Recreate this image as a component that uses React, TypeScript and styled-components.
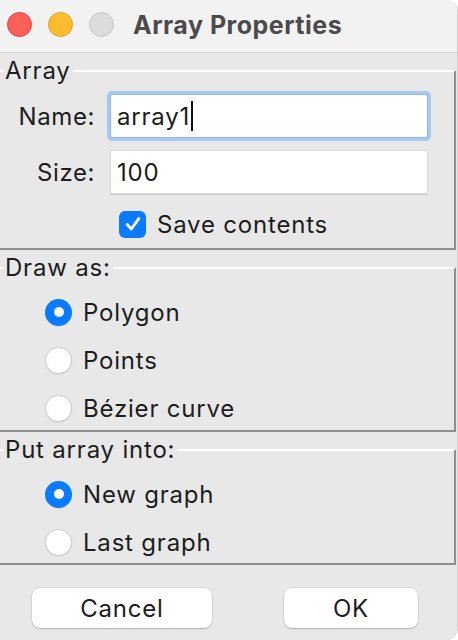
import React from 'react';
import styled, { createGlobalStyle } from 'styled-components';

const GlobalStyle = createGlobalStyle`
  html, body {
    margin: 0;
    padding: 0;
    background: #ffffff;
  }
  body {
    font-family: Inter, "Noto Sans", "Liberation Sans", sans-serif;
    -webkit-font-smoothing: antialiased;
  }
`;

const CheckIcon = () => (
  <svg width="20" height="20" viewBox="0 0 20 20" fill="none">
    <path
      d="M4.2 10.5 L8.3 15 L15.8 4.6"
      stroke="#ffffff"
      strokeWidth="2.8"
      strokeLinecap="round"
      strokeLinejoin="round"
    />
  </svg>
);

export default function App() {
  return (
    <>
      <GlobalStyle />
      <Window>
        <TitleBar>
          <Light $color="#fe5f57" $edge="#e2463f" />
          <Light $color="#febc2e" $edge="#dfa023" />
          <Light $color="#dcdcdc" $edge="#c6c6c6" />
          <Title>Array Properties</Title>
        </TitleBar>

        <Group $bottom={10}>
          <Legend>Array</Legend>
          <FormGrid>
            <Label>Name:</Label>
            <Field $focused>
              array1
              <Caret />
            </Field>
            <Label>Size:</Label>
            <Field>100</Field>
            <span />
            <CheckRow>
              <CheckBox>
                <CheckIcon />
              </CheckBox>
              Save contents
            </CheckRow>
          </FormGrid>
        </Group>

        <Group $bottom={8}>
          <Legend>Draw as:</Legend>
          <RadioList>
            <RadioRow>
              <Radio $checked />
              Polygon
            </RadioRow>
            <RadioRow>
              <Radio />
              Points
            </RadioRow>
            <RadioRow>
              <Radio />
              Bézier curve
            </RadioRow>
          </RadioList>
        </Group>

        <Group $bottom={7}>
          <Legend>Put array into:</Legend>
          <RadioList>
            <RadioRow>
              <Radio $checked />
              New graph
            </RadioRow>
            <RadioRow>
              <Radio />
              Last graph
            </RadioRow>
          </RadioList>
        </Group>

        <Footer>
          <Button $width={180}>Cancel</Button>
          <Button $width={134}>OK</Button>
        </Footer>
      </Window>
    </>
  );
}

const Window = styled.div`
  width: 458px;
  height: 640px;
  box-sizing: border-box;
  background: #e8e8e8;
  border-radius: 0 12px 12px 0;
  border-right: 1px solid #d0d0d0;
  overflow: hidden;
  display: flex;
  flex-direction: column;
  color: #1d1d1d;
  font-size: 24px;
  letter-spacing: 0.8px;
`;

const TitleBar = styled.div`
  flex: none;
  height: 53px;
  box-sizing: border-box;
  background: #f2f2f3;
  border-bottom: 1px solid #d2d2d2;
  display: flex;
  align-items: center;
  gap: 16px;
  padding: 0 0 3px 7px;
`;

const Light = styled.span<{ $color: string; $edge: string }>`
  width: 25px;
  height: 25px;
  border-radius: 50%;
  box-sizing: border-box;
  background: ${(p) => p.$color};
  border: 1px solid ${(p) => p.$edge};
`;

const Title = styled.div`
  margin-left: 3px;
  font-size: 25px;
  font-weight: 700;
  letter-spacing: 0.5px;
  color: #4b4b4b;
`;

const Group = styled.fieldset<{ $bottom: number }>`
  margin: 4px 1px 0 0;
  padding: 0 25px ${(p) => p.$bottom}px 3px;
  min-width: 0;
  border: 0;
  border-top: 2px solid #ffffff;
  border-right: 2px solid #8e8e8e;
  border-bottom: 2px solid #8e8e8e;
`;

const Legend = styled.legend`
  padding: 0 2px;
  font-size: 24px;
  line-height: 28px;
  color: #1d1d1d;
`;

const FormGrid = styled.div`
  display: grid;
  grid-template-columns: 92px 318px;
  grid-template-rows: 44px 44px 32px;
  column-gap: 15px;
  row-gap: 12px;
  padding-top: 9px;
`;

const Label = styled.div`
  align-self: center;
  text-align: right;
  letter-spacing: 0.6px;
`;

const Field = styled.div<{ $focused?: boolean }>`
  box-sizing: border-box;
  height: 44px;
  display: flex;
  align-items: center;
  padding-left: 6px;
  background: #ffffff;
  border: 1px solid ${(p) => (p.$focused ? '#8fb6ee' : '#d8d8d8')};
  box-shadow: ${(p) =>
    p.$focused ? '0 0 0 3px #a9c9f5' : '0 1px 0 #cfcfcf'};
  border-radius: ${(p) => (p.$focused ? '2px' : '0')};
`;

const Caret = styled.span`
  width: 2px;
  height: 30px;
  margin-left: 1px;
  background: #111111;
`;

const CheckRow = styled.div`
  align-self: end;
  height: 28px;
  display: flex;
  align-items: center;
  gap: 11px;
  padding-left: 9px;
`;

const CheckBox = styled.span`
  width: 27px;
  height: 27px;
  border-radius: 6px;
  background: #0b7bfe;
  display: flex;
  align-items: center;
  justify-content: center;
`;

const RadioList = styled.div`
  display: flex;
  flex-direction: column;
  gap: 20px;
  padding: 16px 0 0 42px;
`;

const RadioRow = styled.div`
  height: 28px;
  display: flex;
  align-items: center;
  gap: 11px;
`;

const Radio = styled.span<{ $checked?: boolean }>`
  position: relative;
  width: 27px;
  height: 27px;
  box-sizing: border-box;
  border-radius: 50%;
  background: ${(p) => (p.$checked ? '#0b7bfe' : '#ffffff')};
  border: ${(p) => (p.$checked ? 'none' : '1px solid #cdcdcd')};
  box-shadow: 0 0.5px 1px rgba(0, 0, 0, 0.12);

  &::after {
    content: '';
    display: ${(p) => (p.$checked ? 'block' : 'none')};
    position: absolute;
    left: 50%;
    top: 50%;
    width: 10px;
    height: 10px;
    margin: -5px 0 0 -5px;
    border-radius: 50%;
    background: #ffffff;
  }
`;

const Footer = styled.div`
  display: flex;
  gap: 72px;
  padding: 23px 0 0 32px;
`;

const Button = styled.div<{ $width: number }>`
  width: ${(p) => p.$width}px;
  height: 40px;
  border-radius: 8px;
  background: #ffffff;
  box-shadow: 0 0 0 0.5px rgba(0, 0, 0, 0.12), 0 1px 1.5px rgba(0, 0, 0, 0.2);
  display: flex;
  align-items: center;
  justify-content: center;
  font-size: 24px;
  color: #1d1d1d;
`;
